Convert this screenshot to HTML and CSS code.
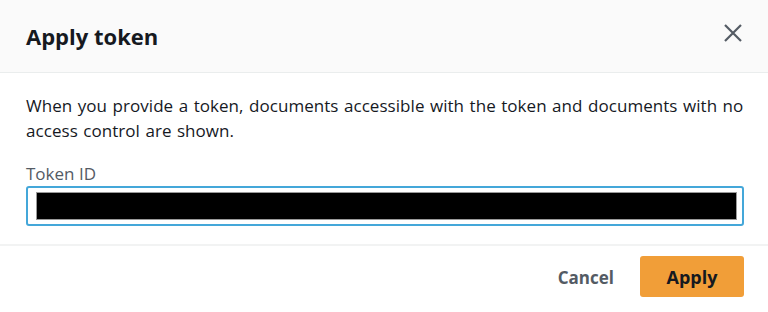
FILE: index.html
```html
<!DOCTYPE html>
<html>
<head>
<meta charset="utf-8">
<link rel="stylesheet" href="styles.css">
</head>
<body>
<div class="modal">
  <header class="modal-header">
    <h2 class="title">Apply token</h2>
    <button class="close" aria-label="Close">
      <svg width="18" height="18" viewBox="0 0 18 18"><path d="M1 1 L17 17 M17 1 L1 17" stroke="#545b64" stroke-width="2.2" fill="none"/></svg>
    </button>
  </header>
  <section class="modal-body">
    <p class="desc">When you provide a token, documents accessible with the token and documents with no access control are shown.</p>
    <label class="label">Token ID</label>
    <div class="input"><div class="redact"></div></div>
  </section>
  <footer class="modal-footer">
    <button class="btn-link">Cancel</button>
    <button class="btn-primary">Apply</button>
  </footer>
</div>
</body>
</html>
```

FILE: styles.css
```css
* { box-sizing: border-box; }
html, body { margin: 0; padding: 0; background: #fff; }
body { font-family: "Open Sans", "Liberation Sans", sans-serif; color: #16191f; width: 768px; height: 312px; overflow: hidden; }
.modal { width: 768px; }
.modal-header {
  height: 73px;
  background: #fafafa;
  border-bottom: 1px solid #eaeded;
  display: flex;
  align-items: center;
  justify-content: space-between;
  padding: 0 26px 0 26px;
}
.title { margin: 0; font-size: 22px; font-weight: 700; letter-spacing: 0; line-height: 26px; padding-bottom: 0; }
.close { background: none; border: 0; padding: 0; width: 18px; height: 18px; display: flex; margin-bottom: 7px; }
.modal-body { padding: 20px 16px 18px 26px; }
.desc { margin: 0; font-size: 17px; line-height: 25px; letter-spacing: 0.05px; word-spacing: 1px; }
.label { display: block; margin-top: 20px; font-size: 17px; line-height: 22px; color: #545b64; }
.input {
  margin-top: 1px;
  width: 718px;
  height: 40px;
  border: 2px solid #44a7d9;
  border-radius: 3px;
  padding: 4px 5px 4px 8px;
}
.redact { height: 28px; background: #000; border: 1px solid #9a9a9a; }
.modal-footer {
  border-top: 2px solid #f2f3f3;
  display: flex;
  justify-content: flex-end;
  align-items: center;
  gap: 26px;
  padding: 10px 24px 0 0;
}
.btn-link { background: none; border: 0; font-family: inherit; font-size: 17px; font-weight: 700; color: #545b64; padding: 0 0 0 0; margin-top: 2px; }
.btn-primary {
  width: 104px; height: 41px;
  background: #f19e38;
  border: 0; border-radius: 3px;
  font-family: inherit; font-size: 18px; font-weight: 700; color: #16191f;
}
```
